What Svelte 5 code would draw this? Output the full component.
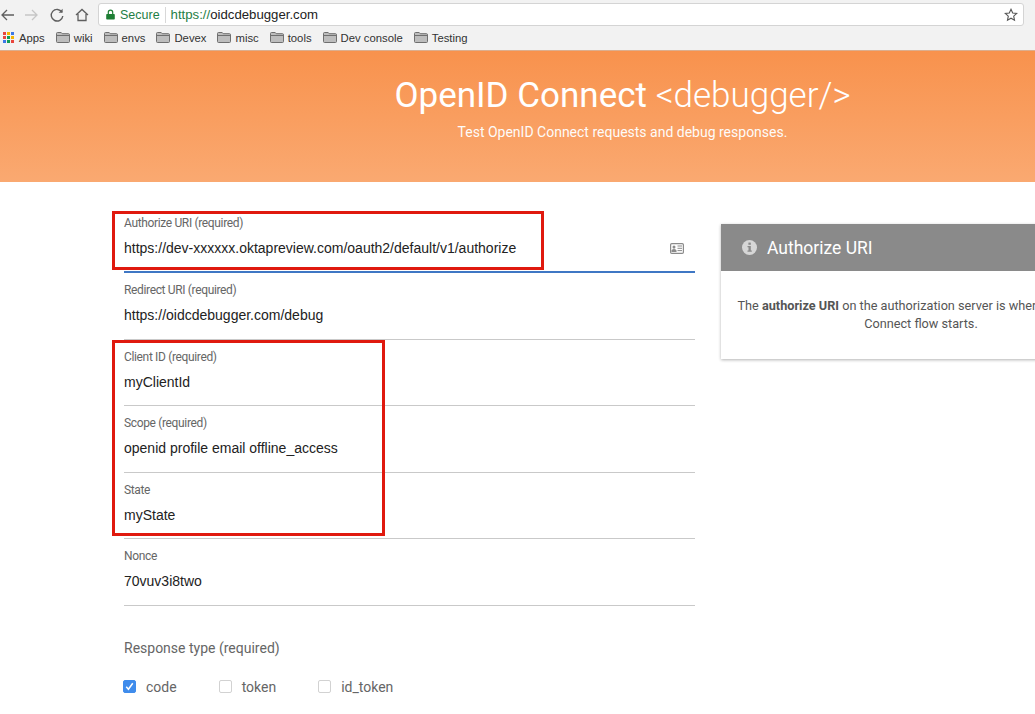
<script>
  const nav = [
    { d: 'M14 10H2M7 5 2 10l5 5', color: '#5f5f5f' },
    { d: 'M1 10h12M8 5l5 5-5 5', color: '#c6c6c6' }
  ];

  const bookmarks = ['wiki', 'envs', 'Devex', 'misc', 'tools', 'Dev console', 'Testing'];
  const appColors = ['#e8453c', '#f4b400', '#3b78e7', '#e8453c', '#0f9d58', '#f4b400', '#3b78e7', '#0f9d58', '#e8453c'];

  const fields = [
    { label: 'Authorize URI (required)', value: 'https://dev-xxxxxx.oktapreview.com/oauth2/default/v1/authorize', active: true },
    { label: 'Redirect URI (required)', value: 'https://oidcdebugger.com/debug' },
    { label: 'Client ID (required)', value: 'myClientId' },
    { label: 'Scope (required)', value: 'openid profile email offline_access' },
    { label: 'State', value: 'myState' },
    { label: 'Nonce', value: '70vuv3i8two' }
  ];

  const responseTypes = [
    { name: 'code', checked: true },
    { name: 'token', checked: false },
    { name: 'id_token', checked: false }
  ];
</script>

<div class="page">
  <div class="toolbar">
    {#each nav as n}
      <svg class="nav" width="16" height="20" viewBox="0 0 16 20" fill="none" stroke={n.color} stroke-width="1.300"><path d={n.d} /></svg>
    {/each}
    <svg class="reload" width="16" height="16" viewBox="0 0 16 16" fill="none" stroke="#5f5f5f" stroke-width="1.400"><path d="M13 5.200A5.800 5.800 0 1 0 13.800 9" /><path d="M13.600 1.800v4h-4" fill="#5f5f5f" stroke="none" /></svg>
    <svg class="home" width="14" height="14" viewBox="0 0 14 14" fill="none" stroke="#5f5f5f" stroke-width="1.300"><path d="M1 7 7 1.500 13 7M3 6v6.500h8V6" /></svg>
    <div class="omnibox">
      <svg width="9" height="11" viewBox="0 0 9 11"><path d="M1 5h7a.8.8 0 0 1 .8.8v4a.8.8 0 0 1-.8.8H1a.8.800 0 0 1-.8-.8v-4A.8.800 0 0 1 1 5Z" fill="#1e7e34" /><path d="M2.300 5V3.300a2.200 2.200 0 0 1 4.400 0V5" fill="none" stroke="#1e7e34" stroke-width="1.200" /></svg>
      <span class="secure">Secure</span>
      <span class="sep"></span>
      <span class="url"><span class="https">https://</span>oidcdebugger.com</span>
      <svg class="star" width="14" height="14" viewBox="0 0 14 14" fill="none" stroke="#555" stroke-width="1.100"><path d="m7 1.300 1.700 3.700 4 .5-3 2.700.8 4L7 10.200l-3.500 2 .8-4-3-2.700 4-.5Z" /></svg>
    </div>
  </div>

  <div class="bookmarks">
    <div class="bm apps">
      <span class="grid">
        {#each appColors as c}
          <i style="background:{c}"></i>
        {/each}
      </span>
      Apps
    </div>
    {#each bookmarks as b}
      <div class="bm">
        <svg width="14" height="11" viewBox="0 0 14 11"><path d="M.5 1.500A1 1 0 0 1 1.500.5h3.700l1 1.200h6.300a1 1 0 0 1 1 1v6.800a1 1 0 0 1-1 1h-11a1 1 0 0 1-1-1Z" fill="#bdbdbd" stroke="#6f6f6f" /><path d="M1 3.500h12" stroke="#6f6f6f" /></svg>
        {b}
      </div>
    {/each}
  </div>

  <header class="hero">
    <h1>OpenID Connect <span>&lt;debugger/&gt;</span></h1>
    <p>Test OpenID Connect requests and debug responses.</p>
  </header>

  <main class="content">
    <form class="form">
      {#each fields as f}
        <div class="field" class:active={f.active}>
          <div class="label">{f.label}</div>
          <div class="value">{f.value}</div>
          {#if f.active}
            <svg class="card-icon" width="14" height="11" viewBox="0 0 14 11"><rect x=".6" y=".6" width="12.800" height="9.800" rx="1.200" fill="none" stroke="#8b8b8b" stroke-width="1.200" /><circle cx="4" cy="4" r="1.500" fill="#8b8b8b" /><path d="M1.800 8.500c0-3 4.400-3 4.400 0ZM7.500 3h4.500M7.500 5.300h4.500M7.500 7.600h4.500" fill="#8b8b8b" stroke="#8b8b8b" /></svg>
          {/if}
        </div>
      {/each}

      <div class="rtype">Response type (required)</div>
      <div class="checks">
        {#each responseTypes as r}
          <div class="check">
            <span class="box" class:checked={r.checked}>
              {#if r.checked}
                <svg width="13" height="13" viewBox="0 0 12 12" fill="none" stroke="#fff" stroke-width="1.400"><path d="m3 6.300 2 2.200 4-5.500" /></svg>
              {/if}
            </span>
            {r.name}
          </div>
        {/each}
      </div>
    </form>

    <aside class="card">
      <div class="card-head">
        <svg width="15" height="15" viewBox="0 0 15 15"><circle cx="7.500" cy="7.500" r="7.500" fill="#d6d6d6" /><rect x="6.400" y="2.600" width="2.400" height="2.200" fill="#8a8a8a" /><path d="M5.500 6h3.300v4.600h1v1.200H5.500v-1.200h1V7.200h-1Z" fill="#8a8a8a" /></svg>
        <span>Authorize URI</span>
      </div>
      <div class="card-body">
        <p>The <b>authorize URI</b> on the authorization server is where an OpenID Connect flow starts.</p>
      </div>
    </aside>
  </main>

  <!-- red annotations drawn over the form -->
  <div class="mark mark-a"></div>
  <div class="mark mark-b"></div>
</div>

<style>
  :global(body) { margin: 0; background: #fff; }

  .page {
    position: relative; width: 1035px; height: 714px; overflow: hidden;
    font-family: Roboto, "Liberation Sans", sans-serif; background: #fff;
  }

  .toolbar {
    height: 27px; box-sizing: border-box; background: #f2f2f2; padding-top: 2px;
    display: flex; align-items: center;
  }
  .nav { margin-right: 8px; }
  .nav + .nav { margin-right: 9px; }
  .home { margin-left: 10px; }
  .omnibox {
    width: 926px; height: 23px; box-sizing: border-box; margin-left: 9px;
    background: #fff; border: 1px solid #d4d4d4; border-radius: 3px;
    display: flex; align-items: center; padding-left: 7px;
    font: 13.200px "Liberation Sans", sans-serif;
  }
  .secure { color: #1e7e45; margin-left: 5px; font-size: 12.500px; }
  .sep { width: 1px; height: 16px; background: #d8d8d8; margin: 0 5px; }
  .url { color: #222; }
  .https { color: #1e7e45; }
  .star { margin-left: auto; margin-right: 5px; }

  .bookmarks {
    height: 24px; background: #f2f2f2; display: flex; align-items: center;
    padding: 0 0 2px 3px; box-sizing: border-box; gap: 11px;
    border-bottom: 1px solid #dcae8e;
    font: 11.300px "Liberation Sans", sans-serif; color: #333;
  }
  .bm { display: flex; align-items: center; gap: 4px; white-space: nowrap; }
  .apps { gap: 5px; }
  .grid { display: grid; grid-template-columns: repeat(3, 3px); gap: 1px; }
  .grid i { width: 3px; height: 3px; display: block; }

  .hero {
    height: 131px; box-sizing: border-box; text-align: center; color: #fff;
    background: linear-gradient(#f8924d, #faa971); padding: 24px 0 0 210px;
  }
  .hero h1 { margin: 0; font-size: 35px; font-weight: 400; line-height: 41px; }
  .hero h1 span { font-weight: 300; }
  .hero p { margin: 8px 0 0; font-size: 14px; line-height: 16px; opacity: .96; }

  .content { display: flex; align-items: flex-start; padding-left: 124px; gap: 26px; }
  .form { width: 571px; flex: none; padding-top: 34px; }

  .field {
    position: relative; height: 66.600px; box-sizing: border-box;
    border-bottom: 1px solid #c9c9c9;
  }
  .field.active { height: 57px; border-bottom: 2px solid #3f77c4; }
  .label { font-size: 12px; letter-spacing: -.35px; line-height: 14px; color: #666; padding-top: 10px; }
  .field.active .label { padding-top: 0; }
  .value {
    margin-top: 9px; font: 14px/19px "Liberation Sans", sans-serif;
    color: #222; white-space: nowrap;
  }
  .card-icon { position: absolute; right: 11px; top: 27px; }

  .rtype { margin-top: 33px; font-size: 14px; line-height: 18px; color: #666; }
  .checks { display: flex; gap: 42px; margin: 22px 0 0 -1px; font-size: 14px; line-height: 16px; color: #666; }
  .check { display: flex; align-items: center; gap: 10px; }
  .box {
    width: 13px; height: 13px; box-sizing: border-box; border: 1px solid #d2d2d2; border-radius: 2px;
    display: block; background: #fff;
  }
  .box.checked { background: #3f8cec; border-color: #3f8cec; }
  .box svg { display: block; margin: -1px; }

  .card {
    width: 400px; flex: none; margin-top: 42px; background: #fff;
    box-shadow: 0 1px 3px rgba(0, 0, 0, .3);
  }
  .card-head {
    height: 47px; background: #8a8a8a; color: #fff; display: flex; align-items: center;
    gap: 10px; padding-left: 21px; font-size: 17.500px;
  }
  .card-body { height: 88px; box-sizing: border-box; padding: 26px 14px 0; text-align: center; }
  .card-body p { margin: 0; font-size: 12.700px; line-height: 18px; color: #555; }
  .card-body p b { font-weight: 700; }

  .mark { position: absolute; border: 3px solid #e0190e; box-sizing: border-box; pointer-events: none; }
  .mark-a { left: 112px; top: 211px; width: 432px; height: 59px; }
  .mark-b { left: 112px; top: 340px; width: 273px; height: 196px; }
</style>
